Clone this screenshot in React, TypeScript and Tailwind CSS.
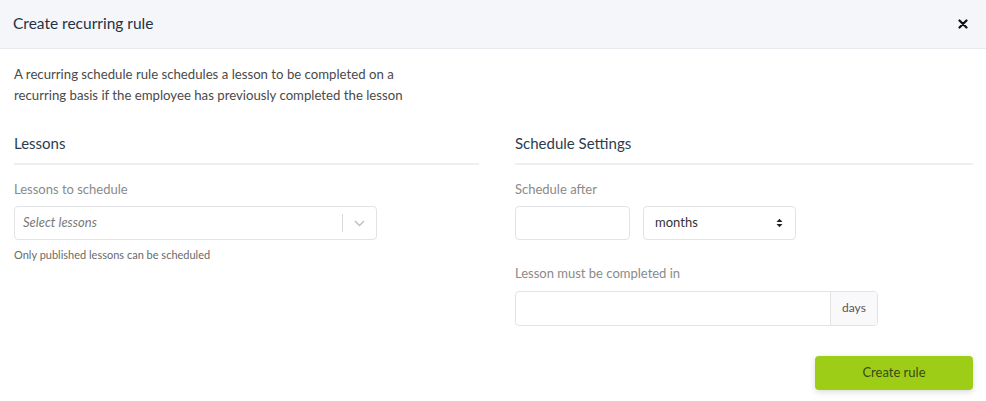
import React from "react";

export default function App() {
  return (
    <div className="w-[986px] h-[401px] bg-white overflow-hidden" style={{ fontFamily: "Lato, 'Noto Sans', sans-serif" }}>
      <div className="h-[49px] bg-[#f5f6fa] border-b border-[#e7e9ef] flex items-center justify-between pl-[13px] pr-[18px]">
        <span className="text-[15.5px] text-[#1e3246]">Create recurring rule</span>
        <svg width="10" height="10" viewBox="0 0 10 10">
          <path d="M1.5 1.5L8.5 8.5M8.5 1.5L1.5 8.5" stroke="#111" strokeWidth="2.2" strokeLinecap="round" />
        </svg>
      </div>
      <div className="pl-[14px] pr-[13px]">
        <p className="mt-[15px] text-[13.2px] leading-[21px] text-[#4a4a4a] w-[420px]">
          A recurring schedule rule schedules a lesson to be completed on a recurring basis if the employee has previously completed the lesson
        </p>
        <div className="flex gap-[36px] mt-[26px]">
          <div className="w-[465px]">
            <div className="text-[15px] text-[#2a3d50] pb-[8px] border-b-2 border-[#eeeff2]">Lessons</div>
            <div className="mt-[15px] text-[13px] text-[#8a8a8a]">Lessons to schedule</div>
            <div className="mt-[7px] w-[363px] h-[34px] border border-[#e2e3e6] rounded-[4px] flex items-center">
              <span className="flex-1 pl-[8px] text-[13px] italic text-[#7a7a7a]">Select lessons</span>
              <span className="w-px h-[18px] bg-[#d8d8d8]" />
              <span className="w-[33px] flex justify-center">
                <svg width="11" height="7" viewBox="0 0 11 7">
                  <path d="M1 1l4.5 4.5L10 1" stroke="#bdbdbd" strokeWidth="1.4" fill="none" />
                </svg>
              </span>
            </div>
            <div className="mt-[7px] text-[11px] text-[#6a6a6a]">Only published lessons can be scheduled</div>
          </div>
          <div className="w-[458px]">
            <div className="text-[15px] text-[#2a3d50] pb-[8px] border-b-2 border-[#eeeff2]">Schedule Settings</div>
            <div className="mt-[15px] text-[13px] text-[#8a8a8a]">Schedule after</div>
            <div className="mt-[7px] flex gap-[13px]">
              <div className="w-[115px] h-[34px] border border-[#e2e3e6] rounded-[4px]" />
              <div className="w-[153px] h-[34px] border border-[#e2e3e6] rounded-[4px] flex items-center justify-between pl-[11px] pr-[12px]">
                <span className="text-[13px] text-[#333]">months</span>
                <svg width="7" height="10" viewBox="0 0 7 10">
                  <path d="M0.5 4L3.5 0.8L6.5 4Z M0.5 6L3.5 9.2L6.5 6Z" fill="#222" />
                </svg>
              </div>
            </div>
            <div className="mt-[24px] text-[13px] text-[#8a8a8a]">Lesson must be completed in</div>
            <div className="mt-[7px] w-[363px] h-[35px] border border-[#e2e3e6] rounded-[4px] flex overflow-hidden">
              <div className="flex-1" />
              <div className="w-[47px] border-l border-[#e2e3e6] bg-[#f9f9fb] flex items-center justify-center text-[12px] text-[#555]">days</div>
            </div>
            <div className="flex justify-end mt-[30px]">
              <button className="w-[158px] h-[34px] rounded-[4px] bg-[#9ecd17] text-[13px] text-[#384a14] shadow-[0_2px_6px_rgba(0,0,0,0.15)]">Create rule</button>
            </div>
          </div>
        </div>
      </div>
    </div>
  );
}
